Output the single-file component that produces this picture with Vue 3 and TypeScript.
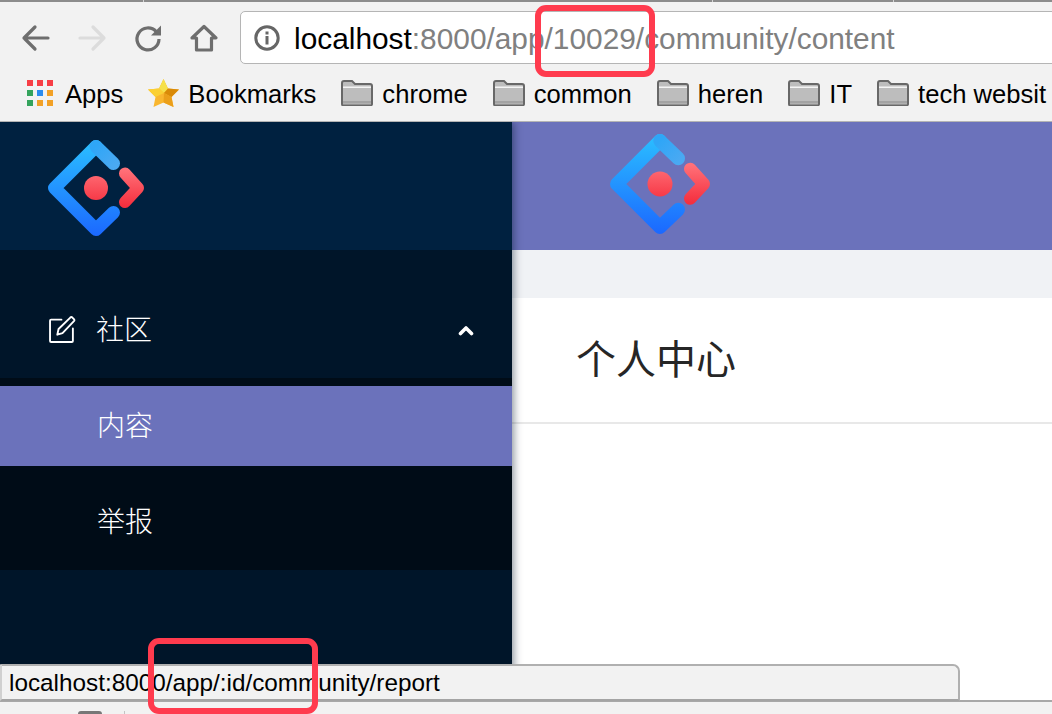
<script setup lang="ts">
interface Bookmark {
  label: string
  kind: 'apps' | 'star' | 'folder'
}

const bookmarks: Bookmark[] = [
  { label: 'Apps', kind: 'apps' },
  { label: 'Bookmarks', kind: 'star' },
  { label: 'chrome', kind: 'folder' },
  { label: 'common', kind: 'folder' },
  { label: 'heren', kind: 'folder' },
  { label: 'IT', kind: 'folder' },
  { label: 'tech websit', kind: 'folder' },
]

const appColors: string[] = [
  '#f73e45', '#f73e45', '#f73e45',
  '#34a35c', '#2b8cf0', '#f2a127',
  '#34a35c', '#f2a127', '#f2a127',
]
</script>

<template>
  <div class="window">
    <header class="browser">
      <div class="tabs-edge"></div>
      <div class="toolbar">
        <div class="nav-buttons">
          <svg class="nav-icon" viewBox="0 0 30 30" fill="none" stroke="#6e6e6e" stroke-width="3.2" stroke-linecap="round" stroke-linejoin="round">
            <path d="M3 15H27M14 4 3 15l11 11" />
          </svg>
          <svg class="nav-icon" viewBox="0 0 30 30" fill="none" stroke="#dcdcdc" stroke-width="3.2" stroke-linecap="round" stroke-linejoin="round">
            <path d="M3 15H27M16 4l11 11-11 11" />
          </svg>
          <svg class="nav-icon" viewBox="0 0 30 30" fill="none">
            <path d="M23.2 8.6A11 11 0 1 0 26 16" stroke="#6e6e6e" stroke-width="3.2" />
            <path d="M28 2.5V12.5H18Z" fill="#6e6e6e" />
          </svg>
          <svg class="nav-icon" viewBox="0 0 30 30" fill="none" stroke="#6e6e6e" stroke-width="3.2" stroke-linejoin="round" stroke-linecap="round">
            <path d="M3 15 15 3.5 27 15H22.5V27H7.5V15Z" />
          </svg>
        </div>
        <div class="omnibox">
          <svg class="info-icon" viewBox="0 0 26 26">
            <circle cx="13" cy="13" r="11.2" fill="none" stroke="#666" stroke-width="3" />
            <rect x="11.5" y="6.5" width="3" height="3" fill="#666" />
            <rect x="11.5" y="11" width="3" height="8.5" fill="#666" />
          </svg>
          <span class="url"><span class="host">localhost</span>:8000/app/10029/community/content</span>
        </div>
      </div>
      <nav class="bookmarks">
        <div v-for="item in bookmarks" :key="item.label" class="bookmark">
          <div v-if="item.kind === 'apps'" class="apps-grid">
            <i v-for="(color, index) in appColors" :key="index" :style="{ background: color }"></i>
          </div>
          <svg v-else-if="item.kind === 'star'" class="star" viewBox="0 0 31 28">
            <path d="M15.5 0 20 9.5 31 10.5 23.5 18 25.5 28 15.5 23.5 5.5 28 7.5 18 0 10.5 11 9.5Z" fill="#f9b62f" />
            <path d="M15.5 0 20 9.5 16 14 11 9.5Z" fill="#f6e04a" />
            <path d="M0 10.5 11 9.5 16 14 7.5 18Z" fill="#fbd033" />
            <path d="M20 9.5 31 10.5 23.5 18 16 14Z" fill="#d98a08" />
            <path d="M16 14 23.5 18 25.5 28 15.5 23.5Z" fill="#eb9f1a" />
          </svg>
          <svg v-else class="folder" viewBox="0 0 32 26">
            <path d="M1 24V3a2 2 0 0 1 2-2h8l3 3h15a2 2 0 0 1 2 2v18a1.500 1.500 0 0 1-1.500 1.500h-27A1.500 1.500 0 0 1 1 24Z" fill="#bdbdbd" stroke="#686868" stroke-width="2" />
            <path d="M2 6.500h28v1.500H2Z" fill="#f4f4f4" />
            <path d="M2 21h28v2.500H2Z" fill="#a3a3a3" />
          </svg>
          <span class="bookmark-label">{{ item.label }}</span>
        </div>
      </nav>
    </header>

    <main class="page">
      <aside class="sidebar">
        <div class="brand">
          <svg class="logo logo-side" viewBox="0 0 96 96">
            <defs>
              <linearGradient id="ant-blue" gradientUnits="userSpaceOnUse" x1="48" y1="0" x2="48" y2="96">
                <stop offset="0" stop-color="#2bc0ff" />
                <stop offset="1" stop-color="#1b68ff" />
              </linearGradient>
              <linearGradient id="ant-light" gradientUnits="userSpaceOnUse" x1="48" y1="6" x2="67" y2="25">
                <stop offset="0" stop-color="#2fa6f7" />
                <stop offset="1" stop-color="#4aa9f2" />
              </linearGradient>
              <linearGradient id="ant-red" gradientUnits="userSpaceOnUse" x1="48" y1="30" x2="48" y2="66">
                <stop offset="0" stop-color="#ff7078" />
                <stop offset="1" stop-color="#f52f3e" />
              </linearGradient>
              <symbol id="ant-logo" viewBox="0 0 96 96">
                <path d="M65.500 72.500 48 89.500 6.500 48 48 6.500" fill="none" stroke="url(#ant-blue)" stroke-width="13" stroke-linecap="round" stroke-linejoin="round" />
                <path d="M48 6.500 65.500 23.500" fill="none" stroke="url(#ant-light)" stroke-width="13" stroke-linecap="round" />
                <path d="M77 33.500 90 48 77 62" fill="none" stroke="url(#ant-red)" stroke-width="12" stroke-linecap="round" stroke-linejoin="round" />
                <circle cx="48" cy="48" r="12" fill="url(#ant-red)" />
              </symbol>
            </defs>
            <use href="#ant-logo" />
          </svg>
        </div>
        <div class="menu">
          <div class="menu-title">
            <svg class="edit-icon" viewBox="0 0 26 26" fill="none" stroke="#fff" stroke-width="1.800" stroke-linecap="round" stroke-linejoin="round">
              <path d="M12 3.500H2a1 1 0 0 0-1 1V24a1 1 0 0 0 1 1h20a1 1 0 0 0 1-1V12" />
              <path d="M8 18l1.200-5.500L20.500 1.500a1.500 1.500 0 0 1 2 0l1.500 1.500a1.500 1.500 0 0 1 0 2L13 16.500Z" />
            </svg>
            <span class="menu-label">社区</span>
            <svg class="chevron" viewBox="0 0 16 11" fill="none" stroke="#fff" stroke-width="3.600" stroke-linecap="round" stroke-linejoin="round">
              <path d="M2.500 8.500 8 3l5.500 5.500" />
            </svg>
          </div>
          <div class="submenu">
            <div class="submenu-item active">内容</div>
            <div class="submenu-item">举报</div>
          </div>
        </div>
      </aside>

      <section class="content">
        <div class="topbar">
          <svg class="logo logo-top" viewBox="0 0 96 96"><use href="#ant-logo" /></svg>
        </div>
        <div class="panel">
          <h1 class="panel-title">个人中心</h1>
        </div>
      </section>
    </main>

    <footer class="download-bar">
      <i class="shelf-chip"></i>
      <i class="shelf-divider"></i>
    </footer>

    <div class="status-bubble">localhost:8000/app/:id/community/report</div>
    <div class="mark mark-url"></div>
    <div class="mark mark-status"></div>
  </div>
</template>

<style>
html,
body {
  margin: 0;
  background: #fff;
  overflow: hidden;
}
</style>

<style scoped>
.window {
  position: relative;
  display: flex;
  flex-direction: column;
  width: 1052px;
  height: 714px;
  overflow: hidden;
  font-family: "Liberation Sans", "Noto Sans CJK SC", sans-serif;
  color: #000;
}

.browser {
  position: relative;
  z-index: 2;
  flex: none;
  height: 122px;
  box-sizing: border-box;
  background: #f2f2f2;
  border-bottom: 1px solid #b4b4b4;
}

.tabs-edge {
  height: 2px;
  background:
    linear-gradient(#d4d4d4, #d4d4d4) 143px 0 / 1px 2px no-repeat,
    linear-gradient(#d4d4d4, #d4d4d4) 712px 0 / 1px 2px no-repeat,
    linear-gradient(#d4d4d4, #d4d4d4) 893px 0 / 1px 2px no-repeat,
    #8c8c8c;
}

.toolbar {
  display: flex;
  align-items: center;
  height: 62px;
  padding: 9px 0 0 21px;
  box-sizing: border-box;
}

.nav-buttons {
  display: flex;
  gap: 26px;
  flex: none;
  width: 219px;
}

.nav-icon {
  width: 30px;
  height: 30px;
}

.omnibox {
  flex: 1;
  display: flex;
  align-items: center;
  gap: 14px;
  height: 53px;
  margin-right: -8px;
  padding-left: 13px;
  box-sizing: border-box;
  background: #fff;
  border: 1px solid #b5b5b5;
  border-radius: 5px;
}

.info-icon {
  flex: none;
  width: 26px;
  height: 26px;
}

.url {
  padding-top: 2px;
  font-size: 29.850px;
  color: #808080;
  white-space: nowrap;
}

.host {
  color: #000;
}

.bookmarks {
  display: flex;
  align-items: center;
  gap: 25px;
  height: 57px;
  padding: 1px 0 0 27px;
  box-sizing: border-box;
  overflow: hidden;
  font-size: 25.600px;
  white-space: nowrap;
}

.bookmark {
  flex: none;
  display: flex;
  align-items: center;
  gap: 9px;
}

.bookmark-label {
  padding-top: 2px;
}

.apps-grid {
  display: grid;
  grid-template-columns: repeat(3, 6px);
  grid-auto-rows: 6px;
  gap: 4px;
  margin-right: 3px;
}

.star {
  width: 31px;
  height: 28px;
}

.folder {
  width: 32px;
  height: 26px;
}

.page {
  flex: 1;
  display: flex;
  min-height: 0;
}

.sidebar {
  position: relative;
  z-index: 1;
  flex: none;
  width: 512px;
  background: #001529;
  box-shadow: 2px 0 8px rgba(0, 21, 41, 0.45);
}

.brand {
  display: flex;
  align-items: center;
  height: 128px;
  padding: 0 0 0 48px;
  box-sizing: border-box;
  background: #002140;
}

.logo {
  display: block;
  flex: none;
}

.logo-side {
  width: 96px;
  height: 96px;
  margin-top: 4px;
}

.menu {
  padding-top: 40px;
}

.menu-title {
  display: flex;
  align-items: center;
  height: 80px;
  padding: 0 38px 0 49px;
  color: #fff;
}

.edit-icon {
  flex: none;
  width: 27px;
  height: 27px;
  margin-top: -2px;
}

.menu-label {
  flex: 1;
  padding: 0 0 4px 20px;
  font-size: 28px;
  font-weight: 300;
}

.chevron {
  flex: none;
  width: 16px;
  height: 11px;
}

.submenu {
  margin-top: 8px;
  padding: 8px 0;
  background: #000c17;
  display: flex;
  flex-direction: column;
  gap: 16px;
}

.submenu-item {
  height: 80px;
  line-height: 82px;
  padding-left: 97px;
  font-size: 28px;
  font-weight: 300;
  color: #fff;
}

.submenu-item.active {
  background: #6b72bb;
}

.content {
  flex: 1;
  min-width: 0;
  display: flex;
  flex-direction: column;
  background: #f0f2f5;
}

.topbar {
  flex: none;
  display: flex;
  align-items: center;
  height: 128px;
  padding-left: 98px;
  box-sizing: border-box;
  background: #6b72bb;
}

.logo-top {
  width: 100px;
  height: 100px;
  margin-top: -4px;
}

.panel {
  flex: 1;
  margin-top: 48px;
  background: #fff;
}

.panel-title {
  margin: 0;
  height: 126px;
  line-height: 124px;
  padding-left: 64px;
  box-sizing: border-box;
  border-bottom: 2px solid #e8e8e8;
  font-size: 40px;
  font-weight: 400;
  color: #262626;
}

.download-bar {
  position: relative;
  z-index: 2;
  flex: none;
  height: 14px;
  box-sizing: border-box;
  background: #f2f2f2;
  border-top: 2px solid #a8a8a8;
}

.shelf-chip {
  position: absolute;
  left: 78px;
  top: 9px;
  width: 24px;
  height: 8px;
  border-radius: 3px 3px 0 0;
  background: #777;
}

.shelf-divider {
  position: absolute;
  left: 124px;
  top: 9px;
  width: 1px;
  height: 6px;
  background: #c4c4c4;
}

.status-bubble {
  position: absolute;
  left: 0;
  top: 664px;
  z-index: 3;
  width: 960px;
  height: 37px;
  box-sizing: border-box;
  padding-left: 7px;
  line-height: 33px;
  font-size: 24.300px;
  white-space: nowrap;
  background: #f2f2f2;
  border: 2px solid #b0b0b0;
  border-bottom-color: #a4a4a4;
  border-left-color: #d0d0d0;
  border-top-right-radius: 7px;
}

.mark {
  position: absolute;
  z-index: 4;
  box-sizing: border-box;
  border: 6px solid #ff3b4e;
  border-radius: 11px;
}

.mark-url {
  left: 535px;
  top: 5px;
  width: 120px;
  height: 72px;
}

.mark-status {
  left: 148px;
  top: 638px;
  width: 170px;
  height: 76px;
}
</style>
